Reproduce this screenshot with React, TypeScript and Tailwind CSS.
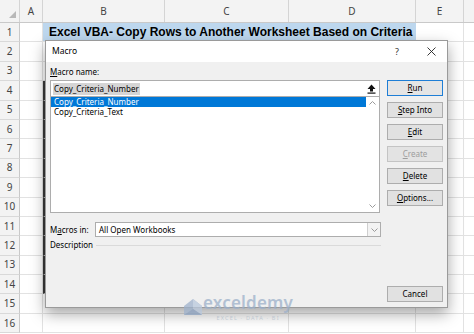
import React from "react";

const rows = Array.from({ length: 16 }, (_, i) => i + 1);

function Btn({ label, u, rest, primary, disabled }: { label?: string; u: string; rest: string; primary?: boolean; disabled?: boolean }) {
  return (
    <div
      className={
        "h-[16px] flex items-center justify-center leading-none " +
        (primary
          ? "bg-[#e5e5e5] border-[1.5px] border-[#1e7ed6]"
          : disabled
          ? "bg-[#e3e3e3] border border-[#c4c4c4] text-[#9d9d9d]"
          : "bg-[#e1e1e1] border border-[#adadad]")
      }
    >
      {label}
      <span className="underline underline-offset-1">{u}</span>
      {rest}
    </div>
  );
}

function Chevron({ up }: { up?: boolean }) {
  return (
    <svg width="7" height="4" viewBox="0 0 7 4" className={up ? "rotate-180" : ""}>
      <path d="M0.5 0.5 L3.5 3.5 L6.5 0.5" fill="none" stroke="#9a9a9a" strokeWidth="1" />
    </svg>
  );
}

export default function App() {
  return (
    <div className="relative w-[474px] h-[334px] overflow-hidden bg-white font-['Noto_Sans',sans-serif]">
      {/* sheet */}
      <div className="flex flex-col">
        <div className="flex h-[23px] bg-[#f3f3f3] border-b border-[#c9c9c9] text-[10px] text-[#444]">
          <div className="w-[20px] border-r border-[#d4d4d4] flex items-end justify-end pr-[3px] pb-[4px]">
            <svg width="7" height="7" viewBox="0 0 7 7">
              <path d="M7 0 L7 7 L0 7 Z" fill="#b8b8b8" />
            </svg>
          </div>
          <div className="w-[23px] border-r border-[#d4d4d4] flex items-center justify-center">A</div>
          <div className="w-[122px] border-r border-[#d4d4d4] flex items-center justify-center">B</div>
          <div className="w-[124px] border-r border-[#d4d4d4] flex items-center justify-center">C</div>
          <div className="w-[127px] border-r border-[#d4d4d4] flex items-center justify-center">D</div>
          <div className="w-[48px] border-r border-[#d4d4d4] flex items-center justify-center">E</div>
          <div className="flex-1" />
        </div>
        {rows.map((r) => (
          <div key={r} className="flex h-[19.4px]">
            <div className="w-[20px] bg-[#f3f3f3] border-r border-[#c9c9c9] border-b border-b-[#d9d9d9] flex items-center justify-center text-[10px] text-[#444]">
              {r}
            </div>
            <div className="w-[23px] border-r border-b border-[#e2e2e2]" />
            {r === 1 ? (
              <div className="w-[373px] bg-[#bdd7ee] border-b border-[#e2e2e2] flex items-center pl-[6px] font-['Liberation_Sans',Arial,sans-serif] font-bold text-[12px] text-black whitespace-nowrap">
                Excel VBA- Copy Rows to Another Worksheet Based on Criteria
              </div>
            ) : (
              <>
                <div className={"w-[122px] border-r border-b border-[#e2e2e2] " + (r >= 4 && r <= 14 ? "border-l-2 border-l-[#3a3a3a]" : "")} />
                <div className="w-[124px] border-r border-b border-[#e2e2e2]" />
                <div className="w-[127px] border-r border-b border-[#e2e2e2]" />
              </>
            )}
            <div className="w-[48px] border-r border-b border-[#e2e2e2]" />
            <div className="flex-1 border-b border-[#e2e2e2]" />
          </div>
        ))}
      </div>

      {/* Macro dialog */}
      <div className="absolute left-[45px] top-[40px] w-[403px] h-[268px] bg-[#f0f0f0] border border-[#9a9a9a] shadow-[0_6px_14px_rgba(0,0,0,0.35)] flex flex-col text-[8px] text-black">
        <div className="h-[21px] bg-white flex items-center pl-[6px] pr-[11px]">
          <span className="text-[8.5px]">Macro</span>
          <span className="ml-auto mr-[28px] text-[9px] text-[#333]">?</span>
          <svg width="9" height="9" viewBox="0 0 9 9">
            <path d="M0.5 0.5 L8.5 8.5 M8.5 0.5 L0.5 8.5" stroke="#222" strokeWidth="0.9" />
          </svg>
        </div>
        <div className="flex-1 flex flex-col px-[4px] pb-[5px]">
          <div className="flex gap-[7px]">
            <div className="w-[330px] flex flex-col">
              <div className="h-[18px] pt-[5px] leading-[10px]">
                <span className="underline underline-offset-1">M</span>acro name:
              </div>
              <div className="h-[17px] bg-white border border-[#adadad] flex items-center pl-[2px]">
                <span className="bg-[#d5d5d5] leading-[12px] px-[1px]">Copy_Criteria_Number</span>
                <div className="ml-auto w-[15px] h-full flex items-center justify-center">
                  <svg width="9" height="10" viewBox="0 0 9 10">
                    <path d="M4.5 0.5 L8.5 5 L6 5 L6 7.5 L3 7.5 L3 5 L0.5 5 Z" fill="#111" />
                    <rect x="0.5" y="8.5" width="8" height="1.2" fill="#111" />
                  </svg>
                </div>
              </div>
              <div className="h-[116px] bg-white border border-t-0 border-[#adadad] flex">
                <div className="flex-1 flex flex-col">
                  <div className="h-[10px] leading-[10px] bg-[#0078d7] text-white pl-[3px]">Copy_Criteria_Number</div>
                  <div className="h-[10px] leading-[10px] pl-[3px]">Copy_Criteria_Text</div>
                </div>
                <div className="w-[13px] flex flex-col items-center justify-between py-[4px]">
                  <Chevron up />
                  <Chevron />
                </div>
              </div>
            </div>
            <div className="w-[56px] pt-[18px] flex flex-col gap-[6px]">
              <Btn u="R" rest="un" primary />
              <Btn u="S" rest="tep Into" />
              <Btn u="E" rest="dit" />
              <Btn u="C" rest="reate" disabled />
              <Btn u="D" rest="elete" />
              <Btn u="O" rest="ptions..." />
            </div>
          </div>
          <div className="w-[331px] flex items-center mt-[9px] h-[15px]">
            <div className="w-[45px]">
              M<span className="underline underline-offset-1">a</span>cros in:
            </div>
            <div className="flex-1 h-full bg-white border border-[#adadad] flex items-center pl-[3px]">
              All Open Workbooks
              <div className="ml-auto w-[13px] h-[13px] border-l border-[#cfcfcf] bg-[#f3f3f3] flex items-center justify-center">
                <Chevron />
              </div>
            </div>
          </div>
          <div className="w-[331px] flex items-center mt-[3px] h-[10px]">
            <span>Description</span>
            <div className="flex-1 ml-[3px] border-t border-[#dadada]" />
          </div>
          <div className="flex-1" />
          <div className="flex justify-end">
            <div className="w-[56px]">
              <Btn u="" rest="Cancel" />
            </div>
          </div>
        </div>
      </div>

      {/* watermark */}
      <div className="absolute left-[184px] top-[293px] flex items-start opacity-75">
        <svg width="18" height="17" viewBox="0 0 18 17" className="mt-[5px]">
          <path d="M0 8 L9 1 L18 8 L18 17 L0 17 Z" fill="#9fb2cc" />
          <path d="M9 1 L18 8 L18 17 L9 11 Z" fill="#b9c8dc" />
          <path d="M0 17 L9 11 L18 17 Z" fill="#8aa0bf" />
        </svg>
        <div className="flex flex-col items-center ml-[1px]">
          <span className="font-semibold text-[17px] leading-[20px] text-[#9cb0ca] tracking-[0.2px]">exceldemy</span>
          <span className="mt-[2px] text-[5.5px] leading-[7px] tracking-[1.2px] text-[#b4bfcc]">EXCEL · DATA · BI</span>
        </div>
      </div>
    </div>
  );
}
